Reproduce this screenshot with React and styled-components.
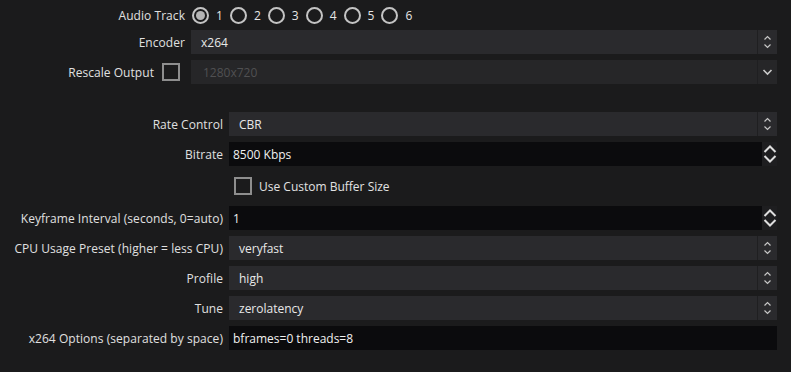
import React from "react";
import styled, { createGlobalStyle } from "styled-components";

const Global = createGlobalStyle`
  html, body { margin: 0; padding: 0; background: #1b1b1c; }
  body { font-family: "Open Sans", "Noto Sans", sans-serif; font-size: 12px; color: #e2e2e2; }
`;

const Page = styled.div`
  width: 791px;
  height: 372px;
  box-sizing: border-box;
  background: #1b1b1c;
  padding-right: 14px;
  display: flex;
  flex-direction: column;
  gap: 28px;
  overflow: hidden;
`;

const Form = styled.div`
  display: grid;
  grid-template-columns: ${(p) => p.$label}px 1fr;
  column-gap: 6px;
  row-gap: 6px;
  align-items: center;
`;

const Label = styled.div`
  text-align: right;
  white-space: nowrap;
  color: #e0e0e0;
  display: flex;
  justify-content: flex-end;
  align-items: center;
  gap: 8px;
  height: 24px;
  box-sizing: border-box;
  padding-top: ${(p) => (p.$top ? `${p.$top}px` : "0")};
  padding-right: ${(p) => (p.$right ? `${p.$right}px` : "0")};
  letter-spacing: 0.05px;
`;

const Radios = styled.div`
  display: flex;
  align-items: center;
  gap: 7px;
  height: 24px;
  padding-top: 7px;
  box-sizing: border-box;
  margin-left: 1px;
`;

const RadioItem = styled.label`
  display: flex;
  align-items: center;
  gap: 7px;
  color: #e6e6e6;
`;

const RadioCircle = styled.span`
  width: 17px;
  height: 17px;
  box-sizing: border-box;
  border-radius: 50%;
  border: 2px solid #c4c4c4;
  display: flex;
  align-items: center;
  justify-content: center;
  &::after {
    content: "";
    width: 9px;
    height: 9px;
    border-radius: 50%;
    background: ${(p) => (p.$checked ? "#b4b4b4" : "transparent")};
  }
`;

const Check = styled.span`
  width: 18px;
  height: 18px;
  box-sizing: border-box;
  border: 2px solid #8e8e8e;
  display: inline-block;
  flex: none;
`;

const Combo = styled.div`
  height: 24px;
  display: flex;
  align-items: center;
  background: ${(p) => (p.$disabled ? "#262628" : "#2a2a2d")};
  color: ${(p) => (p.$disabled ? "#505052" : "#e8e8e8")};
`;

const ComboText = styled.span`
  flex: 1;
  padding-left: ${(p) => (p.$disabled ? "12px" : "10px")};
`;

const ArrowBox = styled.span`
  width: 20px;
  height: 24px;
  border-left: 1px solid #1f1f21;
  display: flex;
  align-items: center;
  justify-content: center;
  box-sizing: border-box;
`;

const Field = styled.div`
  height: 24px;
  display: flex;
  align-items: center;
  background: #0b0b0d;
  color: #f0f0f0;
  padding-left: 4px;
`;

const Spin = styled.div`
  height: 24px;
  display: flex;
  align-items: stretch;
`;

const SpinInput = styled(Field)`
  flex: 1;
`;

const SpinButtons = styled.span`
  width: 15px;
  background: #1e1e20;
  display: flex;
  align-items: center;
  justify-content: center;
`;

const CheckRow = styled.div`
  height: 28px;
  display: flex;
  align-items: center;
  gap: 7px;
  padding-left: 5px;
  color: #e2e2e2;
`;

const UpDown = () => (
  <ArrowBox>
    <svg width="9" height="14" viewBox="0 0 9 14">
      <path d="M1.5 4.5 L4.5 1.5 L7.5 4.5" fill="none" stroke="#c6c6c6" strokeWidth="1.2" />
      <path d="M1.5 9.5 L4.5 12.5 L7.5 9.5" fill="none" stroke="#c6c6c6" strokeWidth="1.2" />
    </svg>
  </ArrowBox>
);

const Down = () => (
  <ArrowBox>
    <svg width="11" height="8" viewBox="0 0 11 8">
      <path d="M1.5 2 L5.5 6 L9.5 2" fill="none" stroke="#cacaca" strokeWidth="1.6" />
    </svg>
  </ArrowBox>
);

const SpinArrows = () => (
  <SpinButtons>
    <svg width="14" height="22" viewBox="0 0 14 22">
      <path d="M1.5 9 L7 3.5 L12.5 9" fill="none" stroke="#dedede" strokeWidth="2" />
      <path d="M1.5 13 L7 18.5 L12.5 13" fill="none" stroke="#dedede" strokeWidth="2" />
    </svg>
  </SpinButtons>
);

const ComboBox = ({ value }) => (
  <Combo>
    <ComboText>{value}</ComboText>
    <UpDown />
  </Combo>
);

const SpinBox = ({ value }) => (
  <Spin>
    <SpinInput>{value}</SpinInput>
    <SpinArrows />
  </Spin>
);

export default function App() {
  return (
    <>
      <Global />
      <Page>
        <Form $label={185}>
          <Label $top={7}>Audio Track</Label>
          <Radios>
            {[1, 2, 3, 4, 5, 6].map((n) => (
              <RadioItem key={n}>
                <RadioCircle $checked={n === 1} />
                {n}
              </RadioItem>
            ))}
          </Radios>
          <Label>Encoder</Label>
          <ComboBox value="x264" />
          <Label $right={5}>
            Rescale Output
            <Check />
          </Label>
          <Combo $disabled>
            <ComboText $disabled>1280x720</ComboText>
            <Down />
          </Combo>
        </Form>
        <Form $label={223}>
          <Label>Rate Control</Label>
          <ComboBox value="CBR" />
          <Label>Bitrate</Label>
          <SpinBox value="8500 Kbps" />
          <span />
          <CheckRow>
            <Check />
            Use Custom Buffer Size
          </CheckRow>
          <Label>Keyframe Interval (seconds, 0=auto)</Label>
          <SpinBox value="1" />
          <Label>CPU Usage Preset (higher = less CPU)</Label>
          <ComboBox value="veryfast" />
          <Label>Profile</Label>
          <ComboBox value="high" />
          <Label>Tune</Label>
          <ComboBox value="zerolatency" />
          <Label>x264 Options (separated by space)</Label>
          <Field>bframes=0 threads=8</Field>
        </Form>
      </Page>
    </>
  );
}
